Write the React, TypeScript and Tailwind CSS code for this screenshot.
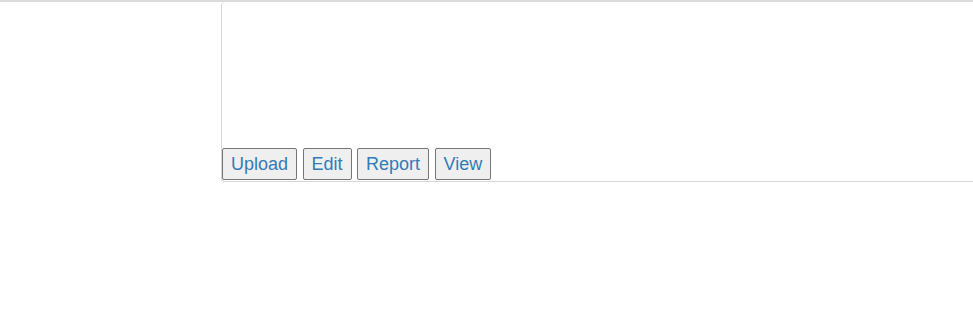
export default function App() {
  const buttons = ['Upload', 'Edit', 'Report', 'View'];

  return (
    <div className="w-[973px] h-[329px] bg-white overflow-hidden border-t-2 border-[#dcdcdc] font-['Liberation_Sans',Arial,sans-serif]">
      <div className="ml-[221px] h-[180px] flex flex-col border-l border-b border-[#d6d6d6] rounded-l-[4px]">
        {/* empty content area */}
        <div className="flex-1" />
        <div className="flex gap-[5.5px] pb-px">
          {buttons.map(label => (
            <button
              key={label}
              className="h-[32px] px-[8px] text-[18px] leading-none text-[#337ab7] bg-[#efefef] border border-[#767676] rounded-[2px]"
            >
              {label}
            </button>
          ))}
        </div>
      </div>
    </div>
  );
}
